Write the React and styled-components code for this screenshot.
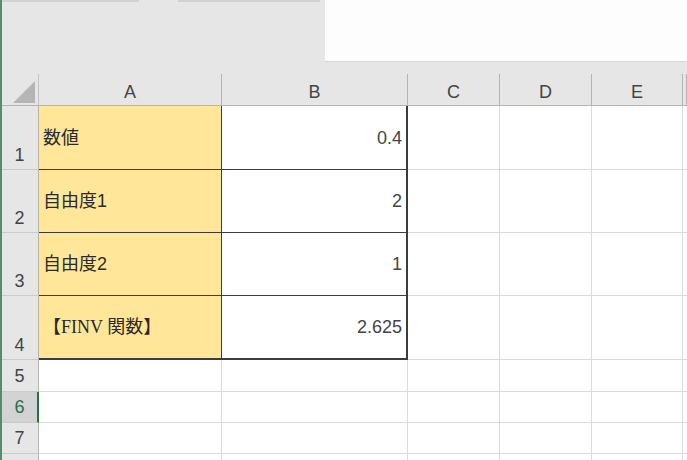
import React from 'react';
import styled, { createGlobalStyle } from 'styled-components';

const COLS = '37px 183px 186px 92px 92px 91px 1fr';
const GRID = '#dadada';
const DARK = '#3c3c3c';
const HEAD_BG = '#e6e6e6';
const HEAD_LINE = '#b4b4b4';

const Global = createGlobalStyle`
  html, body { margin: 0; padding: 0; background: #fff; overflow: hidden; }
  body { font-family: "Liberation Sans", "Noto Sans CJK JP", sans-serif; }
`;

const Window = styled.div`
  width: 687px;
  height: 460px;
  box-sizing: border-box;
  border-left: 2px solid #4f8f69;
  display: flex;
  flex-direction: column;
  overflow: hidden;
`;

const TopArea = styled.div`
  height: 62px;
  display: flex;
  flex-shrink: 0;
`;

const TabStrip = styled.div`
  width: 323px;
  background: ${HEAD_BG};
  display: flex;
  align-items: flex-start;
  gap: 39px;
`;

const TabEdge = styled.div`
  height: 2px;
  width: ${p => p.$w}px;
  background: #d2d2d2;
`;

const NameArea = styled.div`
  flex: 1;
  background: #fdfdfd;
  border-bottom: 1px solid #d8d8d8;
`;

const HeaderRow = styled.div`
  display: grid;
  grid-template-columns: ${COLS};
  height: 44px;
  box-sizing: border-box;
  padding-top: 12px;
  background: ${HEAD_BG};
  border-bottom: 1px solid ${HEAD_LINE};
  flex-shrink: 0;
`;

const Corner = styled.div`
  border-right: 1px solid #c4c4c4;
  display: flex;
  align-items: flex-end;
  justify-content: flex-end;
  padding: 0 3px 2px 0;
`;

const ColHead = styled.div`
  border-right: 1px solid ${HEAD_LINE};
  display: flex;
  align-items: center;
  justify-content: center;
  padding-top: 4px;
  font-size: 18px;
  color: #444;
  line-height: 20px;
`;

const Row = styled.div`
  display: grid;
  grid-template-columns: ${COLS};
  height: ${p => p.$h}px;
  flex-shrink: 0;
`;

const RowHead = styled.div`
  box-sizing: border-box;
  background: ${p => (p.$selected ? '#d3d3d3' : HEAD_BG)};
  border-right: ${p => (p.$selected ? '2px solid #217346' : `1px solid ${HEAD_LINE}`)};
  border-bottom: 1px solid #cacaca;
  display: flex;
  align-items: ${p => (p.$tall ? 'flex-end' : 'center')};
  justify-content: center;
  padding-bottom: ${p => (p.$tall ? '4px' : '0')};
  padding-right: ${p => (p.$selected ? '0' : '1px')};
  font-size: 18px;
  line-height: 20px;
  color: ${p => (p.$selected ? '#2c6b4a' : '#444')};
`;

const Cell = styled.div`
  box-sizing: border-box;
  background: ${p => p.$fill || '#fff'};
  border-right: ${p => (p.$boxRight ? `${p.$boxRight}px solid ${DARK}` : `1px solid ${GRID}`)};
  border-bottom: ${p => (p.$boxBottom ? `${p.$boxBottom}px solid ${DARK}` : `1px solid ${GRID}`)};
  display: flex;
  align-items: center;
  justify-content: ${p => (p.$right ? 'flex-end' : 'flex-start')};
  padding: 0 4px;
  font-size: 18px;
  line-height: 22px;
  white-space: nowrap;
  color: ${p => (p.$right ? '#444' : '#2a2a2a')};
  font-family: ${p =>
    p.$serif
      ? '"Liberation Serif", "Noto Sans CJK JP", serif'
      : '"Liberation Sans", "Noto Sans CJK JP", sans-serif'};
`;

const SelectAll = () => (
  <svg width="22" height="22" viewBox="0 0 22 22">
    <polygon points="22,0 22,22 0,22" fill="#b5b5b5" />
  </svg>
);

const columns = ['A', 'B', 'C', 'D', 'E', ''];

const rows = [
  { n: 1, h: 64, a: '数値', b: '0.4' },
  { n: 2, h: 63, a: '自由度1', b: '2' },
  { n: 3, h: 63, a: '自由度2', b: '1' },
  { n: 4, h: 64, a: '【FINV 関数】', b: '2.625', serif: true, last: true },
  { n: 5, h: 32 },
  { n: 6, h: 31, selected: true },
  { n: 7, h: 31 },
  { n: 8, h: 31, hidden: true },
];

export default function App() {
  return (
    <>
      <Global />
      <Window>
        <TopArea>
          <TabStrip>
            <TabEdge $w={137} />
            <TabEdge $w={142} />
          </TabStrip>
          <NameArea />
        </TopArea>
        <HeaderRow>
          <Corner>
            <SelectAll />
          </Corner>
          {columns.map((c, i) => (
            <ColHead key={i}>{c}</ColHead>
          ))}
        </HeaderRow>
        {rows.map(r => {
          const inTable = r.a !== undefined;
          const bottom = inTable ? (r.last ? 2 : 1) : 0;
          return (
            <Row key={r.n} $h={r.h}>
              <RowHead $tall={r.h > 40} $selected={r.selected}>
                {r.hidden ? null : r.n}
              </RowHead>
              <Cell
                $fill={inTable ? '#ffe699' : undefined}
                $boxRight={inTable ? 1 : 0}
                $boxBottom={bottom}
                $serif={r.serif}
              >
                {r.a}
              </Cell>
              <Cell $right $boxRight={inTable ? 2 : 0} $boxBottom={bottom}>
                {r.b}
              </Cell>
              <Cell />
              <Cell />
              <Cell />
              <Cell />
            </Row>
          );
        })}
      </Window>
    </>
  );
}
